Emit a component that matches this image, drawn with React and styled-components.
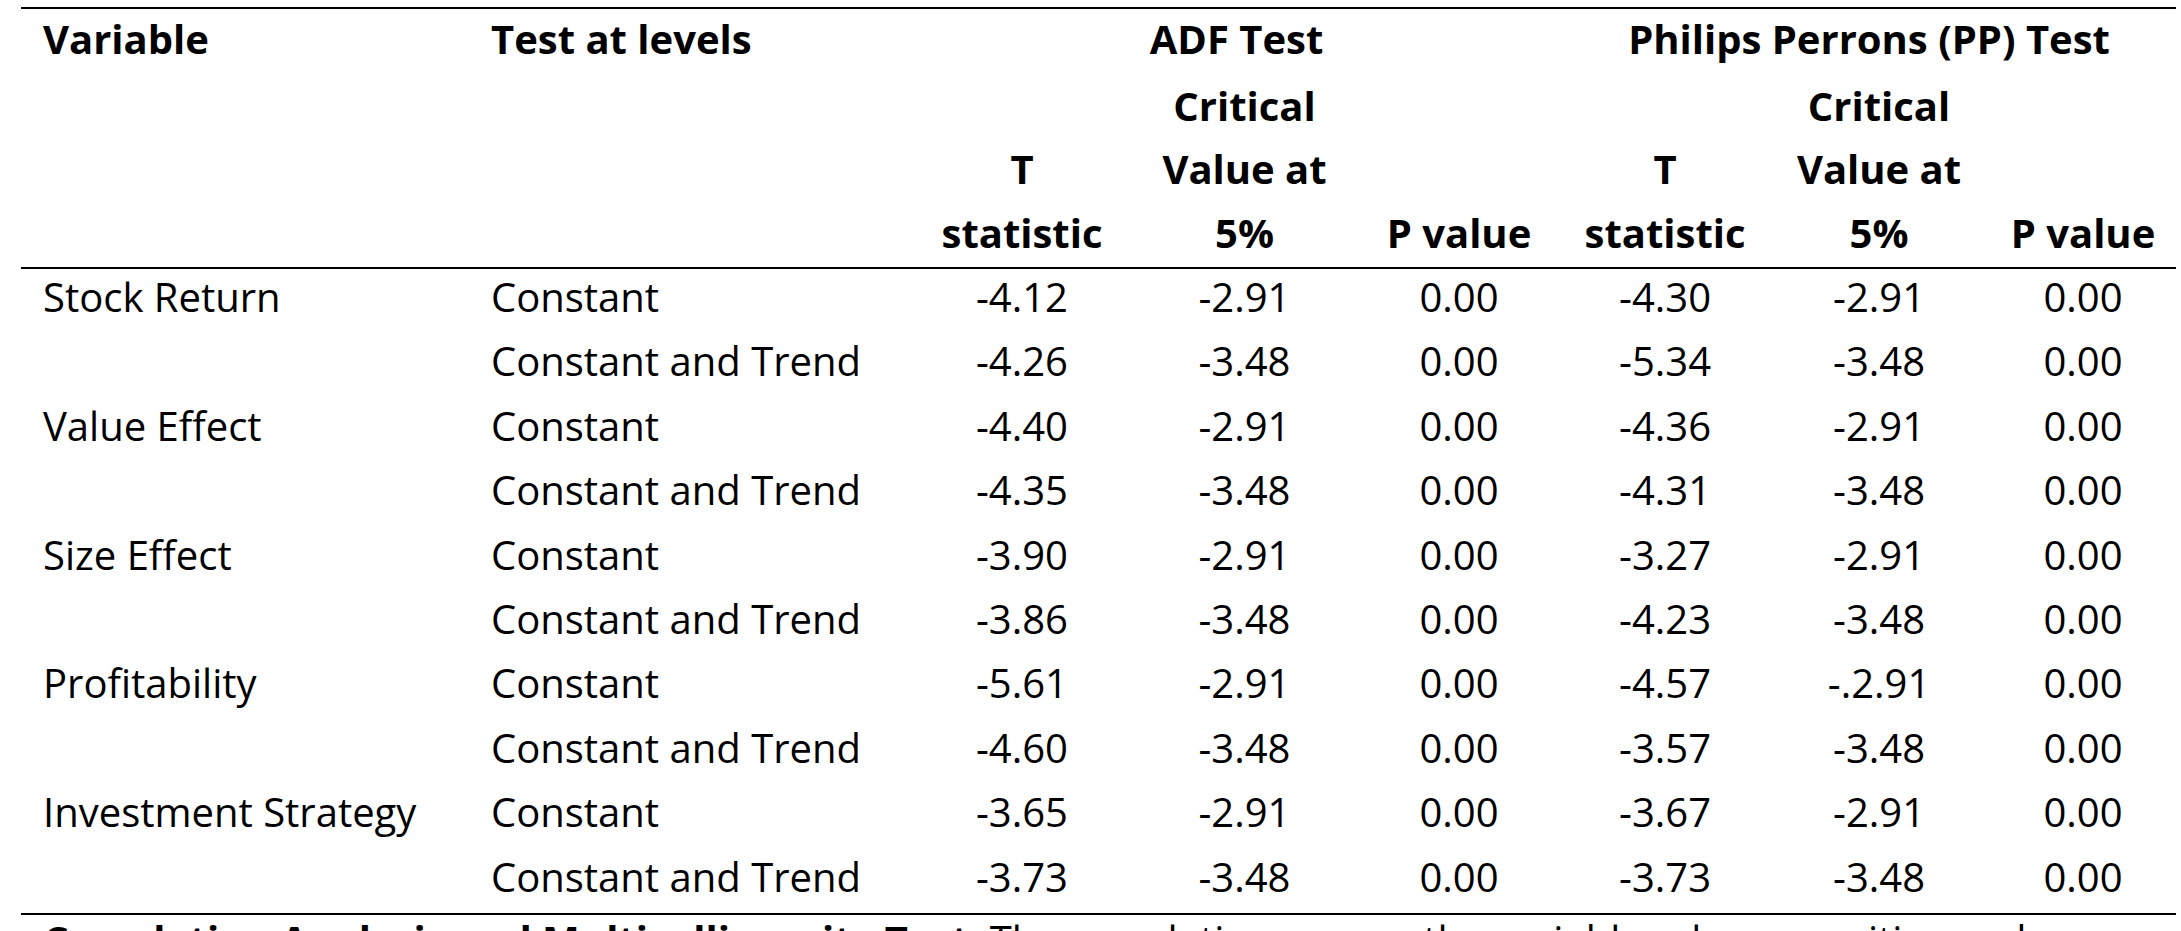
import React from "react"
import styled, { createGlobalStyle } from "styled-components"

const GlobalStyle = createGlobalStyle`
  html, body {
    margin: 0;
    padding: 0;
    background: #fff;
    overflow: hidden;
  }
  body {
    font-family: "Open Sans", "Noto Sans", sans-serif;
    color: #000;
  }
`

const Page = styled.div`
  padding: 7px 0 0 21px;
  width: 2155px;
`

const Table = styled.table`
  width: 2155px;
  table-layout: fixed;
  border-collapse: separate;
  border-spacing: 0;
  border-top: 2px solid #000;
  border-bottom: 2px solid #000;
  font-size: 40px;
`

// top row of the heading: one line each
const GroupHead = styled.th`
  padding: ${(p) => (p.$align === "left" ? "0 0 4px 22px" : "0 0 4px")};
  text-align: ${(p) => p.$align || "center"};
  vertical-align: top;
  font-weight: 700;
  line-height: 60.5px;
  white-space: nowrap;
  border-bottom: ${(p) => (p.$rule ? "2px solid #000" : "none")};
`

// lower part of the heading: stacked lines sitting on the rule
const SubHead = styled.th`
  padding: 0 0 3px;
  text-align: center;
  vertical-align: bottom;
  font-weight: 700;
  line-height: 63.5px;
  white-space: nowrap;
  border-bottom: 2px solid #000;
`

const Cell = styled.td`
  padding: ${(p) => (p.$align === "left" ? "0 0 8px 22px" : "0 0 8px")};
  text-align: ${(p) => p.$align || "center"};
  line-height: 56.4px;
  white-space: nowrap;
  vertical-align: top;
`

const Note = styled.p`
  margin: 0;
  padding: 0 0 0 22px;
  font-size: 40px;
  line-height: 50px;

  strong {
    font-weight: 700;
  }
`

const widths = [448, 442, 222, 223, 206, 206, 222, 186]

const data = [
  {
    name: "Stock Return",
    rows: [
      ["Constant", "-4.12", "-2.91", "0.00", "-4.30", "-2.91", "0.00"],
      ["Constant and Trend", "-4.26", "-3.48", "0.00", "-5.34", "-3.48", "0.00"],
    ],
  },
  {
    name: "Value Effect",
    rows: [
      ["Constant", "-4.40", "-2.91", "0.00", "-4.36", "-2.91", "0.00"],
      ["Constant and Trend", "-4.35", "-3.48", "0.00", "-4.31", "-3.48", "0.00"],
    ],
  },
  {
    name: "Size Effect",
    rows: [
      ["Constant", "-3.90", "-2.91", "0.00", "-3.27", "-2.91", "0.00"],
      ["Constant and Trend", "-3.86", "-3.48", "0.00", "-4.23", "-3.48", "0.00"],
    ],
  },
  {
    name: "Profitability",
    rows: [
      ["Constant", "-5.61", "-2.91", "0.00", "-4.57", "-.2.91", "0.00"],
      ["Constant and Trend", "-4.60", "-3.48", "0.00", "-3.57", "-3.48", "0.00"],
    ],
  },
  {
    name: "Investment Strategy",
    rows: [
      ["Constant", "-3.65", "-2.91", "0.00", "-3.67", "-2.91", "0.00"],
      ["Constant and Trend", "-3.73", "-3.48", "0.00", "-3.73", "-3.48", "0.00"],
    ],
  },
]

// sub headings under each test group
function SubHeads() {
  return (
    <>
      <SubHead>
        T
        <br />
        statistic
      </SubHead>
      <SubHead>
        Critical
        <br />
        Value at
        <br />
        5%
      </SubHead>
      <SubHead>P value</SubHead>
    </>
  )
}

export default function App() {
  return (
    <Page>
      <GlobalStyle />
      <Table>
        <colgroup>
          {widths.map((w, i) => (
            <col key={i} style={{ width: w }} />
          ))}
        </colgroup>
        <thead>
          <tr>
            <GroupHead $align="left" rowSpan={2} $rule>
              Variable
            </GroupHead>
            <GroupHead $align="left" rowSpan={2} $rule>
              Test at levels
            </GroupHead>
            <GroupHead colSpan={3}>ADF Test</GroupHead>
            <GroupHead colSpan={3}>Philips Perrons (PP) Test</GroupHead>
          </tr>
          <tr>
            <SubHeads />
            <SubHeads />
          </tr>
        </thead>
        <tbody>
          {data.map((group) =>
            group.rows.map((row, i) => (
              <tr key={group.name + i}>
                <Cell $align="left">{i === 0 ? group.name : ""}</Cell>
                {row.map((v, j) => (
                  <Cell key={j} $align={j === 0 ? "left" : "center"}>
                    {v}
                  </Cell>
                ))}
              </tr>
            ))
          )}
        </tbody>
      </Table>
      <Note>
        <strong>Correlation Analysis and Multicollinearity Test</strong>: The correlation among the variables
        shows positive and significant relationship between the variables of the study.
      </Note>
    </Page>
  )
}
